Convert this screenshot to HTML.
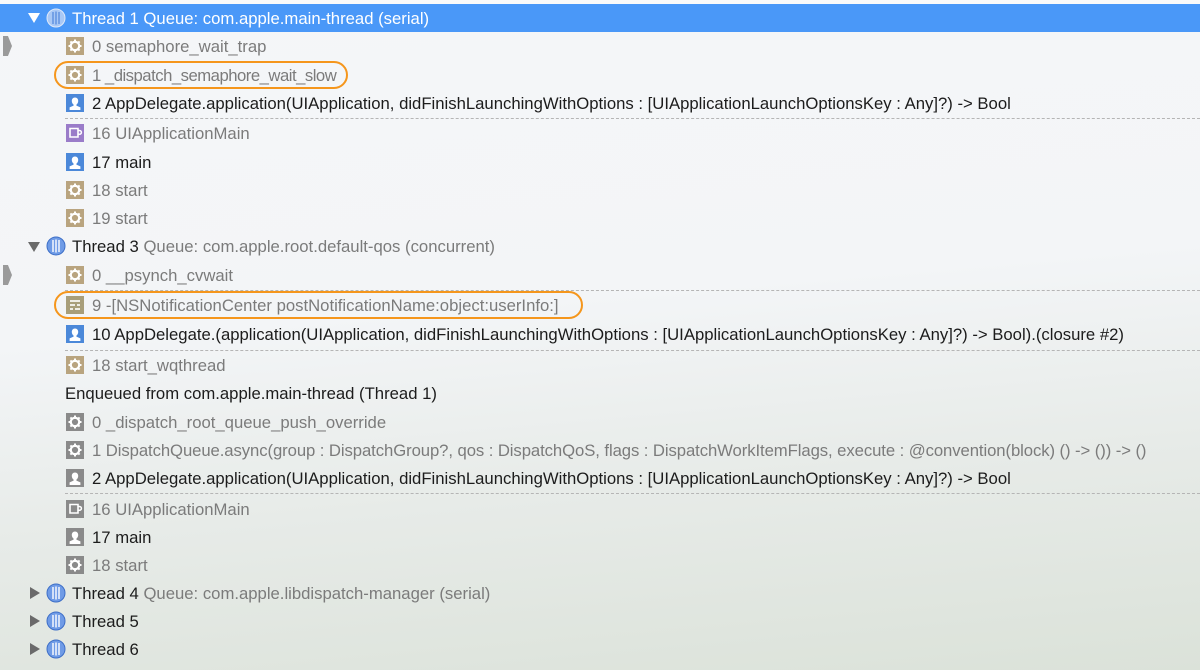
<!DOCTYPE html>
<html><head><meta charset="utf-8"><style>
html,body{margin:0;padding:0}
body{width:1200px;height:670px;overflow:hidden;position:relative;font-family:"Liberation Sans",Helvetica,Arial,sans-serif;font-size:16.7px;background:linear-gradient(175deg,#f5f6f8 0%,#f3f5f7 45%,#e7ebe8 70%,#dbe2d9 100%);}
.r{position:absolute;height:24px;line-height:26px;white-space:nowrap;color:#1c1c1c}
.g{color:#7b7b7b}
.ic{position:absolute;width:18px;height:18px;box-sizing:border-box}
.dash{position:absolute;left:65px;right:0;border-top:1px dashed #b5b5b5;height:0}
.tri{position:absolute;width:0;height:0}
.sel{position:absolute;left:0;top:4px;width:1200px;height:28px;background:#4a98f8}
.oval{position:absolute;border:2.5px solid #f5961c;border-radius:14px;box-sizing:border-box}
.tab{position:absolute;left:3px;width:9px;height:20px;background:#9a9a9a;clip-path:polygon(0 0,55% 0,100% 50%,55% 100%,0 100%)}
</style></head><body>
<div style="position:absolute;left:0;top:0;width:1200px;height:4px;background:#fafafa;border-bottom:1px solid #ddd"></div>
<div class="sel"></div>
<svg width="0" height="0" style="position:absolute">
<defs>
<symbol id="gear" viewBox="0 0 18 18"><circle cx="9" cy="9" r="4.2" fill="none" stroke="#fff" stroke-width="2.2"/><g stroke="#fff" stroke-width="2"><line x1="9" y1="2.5" x2="9" y2="4.5"/><line x1="9" y1="13.5" x2="9" y2="15.5"/><line x1="2.5" y1="9" x2="4.5" y2="9"/><line x1="13.5" y1="9" x2="15.5" y2="9"/><line x1="4.4" y1="4.4" x2="5.8" y2="5.8"/><line x1="12.2" y1="12.2" x2="13.6" y2="13.6"/><line x1="4.4" y1="13.6" x2="5.8" y2="12.2"/><line x1="12.2" y1="5.8" x2="13.6" y2="4.4"/></g></symbol>
<symbol id="person" viewBox="0 0 18 18"><path d="M9 3.5c-2 0-3.2 1.5-3.2 3.5 0 1.6.8 3 1.8 3.6v1l-4 1.8V16h10.8v-2.6l-4-1.8v-1c1-.6 1.8-2 1.8-3.6 0-2-1.2-3.5-3.2-3.5z" fill="#fff"/></symbol>
<symbol id="cup" viewBox="0 0 18 18"><path d="M4 4.5h8v8.5H4z" fill="none" stroke="#fff" stroke-width="1.6"/><path d="M12 6.5h1.5a1.8 1.8 0 0 1 0 3.8H12" fill="none" stroke="#fff" stroke-width="1.5"/></symbol>
<symbol id="lines" viewBox="0 0 18 18"><g stroke="#fff" stroke-width="1.6"><line x1="4" y1="5" x2="14" y2="5"/><line x1="4" y1="9" x2="9" y2="9"/><line x1="11" y1="9" x2="14" y2="9"/><line x1="4" y1="13" x2="7" y2="13"/><line x1="9" y1="13" x2="14" y2="13"/></g></symbol>
<symbol id="thread" viewBox="0 0 20 20"><circle cx="10" cy="10" r="9" fill="#6f9be6" stroke="#3e6fc7" stroke-width="1"/><g stroke="#fff" stroke-width="1.4"><line x1="7" y1="4" x2="7" y2="16"/><line x1="10" y1="3.5" x2="10" y2="16.5"/><line x1="13" y1="4" x2="13" y2="16"/></g></symbol>
<symbol id="threadsel" viewBox="0 0 20 20"><circle cx="10" cy="10" r="9" fill="#a9c8f5" stroke="#dfe9f9" stroke-width="1"/><g stroke="#5c8fe0" stroke-width="1.4"><line x1="7" y1="4" x2="7" y2="16"/><line x1="10" y1="3.5" x2="10" y2="16.5"/><line x1="13" y1="4" x2="13" y2="16"/></g></symbol>
</defs></svg>

<div class="tri" style="left:28px;top:13px;border-left:6px solid transparent;border-right:6px solid transparent;border-top:10px solid #fff"></div>
<svg style="position:absolute;left:46px;top:8px" width="20" height="20"><use href="#threadsel"/></svg>
<div class="r" style="left:72px;top:6px;color:#fff">Thread 1 Queue: com.apple.main-thread (serial)</div>

<div class="tab" style="top:36px"></div>
<svg class="ic" style="left:66px;top:37px;background:#b9a47f" width="18" height="18"><use href="#gear"/></svg>
<div class="r g" style="left:92px;top:34px">0 semaphore_wait_trap</div>
<svg class="ic" style="left:66px;top:66px;background:#b9a47f" width="18" height="18"><use href="#gear"/></svg>
<div class="r g" style="left:92px;top:63px;letter-spacing:-0.5px">1 _dispatch_semaphore_wait_slow</div>
<div class="oval" style="left:54px;top:61px;width:294px;height:28px"></div>
<svg class="ic" style="left:66px;top:94px;background:#4b88d9" width="18" height="18"><use href="#person"/></svg>
<div class="r" style="left:92px;top:91px">2 AppDelegate.application(UIApplication, didFinishLaunchingWithOptions : [UIApplicationLaunchOptionsKey : Any]?) -&gt; Bool</div>
<div class="dash" style="top:118px"></div>
<svg class="ic" style="left:66px;top:124px;background:#9a7cc9" width="18" height="18"><use href="#cup"/></svg>
<div class="r g" style="left:92px;top:121px">16 UIApplicationMain</div>
<svg class="ic" style="left:66px;top:153px;background:#4b88d9" width="18" height="18"><use href="#person"/></svg>
<div class="r" style="left:92px;top:150px">17 main</div>
<svg class="ic" style="left:66px;top:181px;background:#b9a47f" width="18" height="18"><use href="#gear"/></svg>
<div class="r g" style="left:92px;top:178px">18 start</div>
<svg class="ic" style="left:66px;top:209px;background:#b9a47f" width="18" height="18"><use href="#gear"/></svg>
<div class="r g" style="left:92px;top:206px">19 start</div>

<div class="tri" style="left:28px;top:242px;border-left:6px solid transparent;border-right:6px solid transparent;border-top:10px solid #6a6a6a"></div>
<svg style="position:absolute;left:46px;top:236px" width="20" height="20"><use href="#thread"/></svg>
<div class="r" style="left:72px;top:234px">Thread 3 <span class="g">Queue: com.apple.root.default-qos (concurrent)</span></div>
<div class="tab" style="top:265px"></div>
<svg class="ic" style="left:66px;top:266px;background:#b9a47f" width="18" height="18"><use href="#gear"/></svg>
<div class="r g" style="left:92px;top:263px">0 __psynch_cvwait</div>
<div class="dash" style="top:290px"></div>
<svg class="ic" style="left:66px;top:296px;background:#a89e7a" width="18" height="18"><use href="#lines"/></svg>
<div class="r g" style="left:92px;top:293px">9 -[NSNotificationCenter postNotificationName:object:userInfo:]</div>
<div class="oval" style="left:54px;top:291px;width:529px;height:28px"></div>
<svg class="ic" style="left:66px;top:325px;background:#4b88d9" width="18" height="18"><use href="#person"/></svg>
<div class="r" style="left:92px;top:322px">10 AppDelegate.(application(UIApplication, didFinishLaunchingWithOptions : [UIApplicationLaunchOptionsKey : Any]?) -&gt; Bool).(closure #2)</div>
<div class="dash" style="top:350px"></div>
<svg class="ic" style="left:66px;top:356px;background:#b9a47f" width="18" height="18"><use href="#gear"/></svg>
<div class="r g" style="left:92px;top:353px">18 start_wqthread</div>
<div class="r" style="left:65px;top:381px">Enqueued from com.apple.main-thread (Thread 1)</div>
<svg class="ic" style="left:66px;top:413px;background:#8a8a8a" width="18" height="18"><use href="#gear"/></svg>
<div class="r g" style="left:92px;top:410px">0 _dispatch_root_queue_push_override</div>
<svg class="ic" style="left:66px;top:441px;background:#8a8a8a" width="18" height="18"><use href="#gear"/></svg>
<div class="r g" style="left:92px;top:438px;letter-spacing:-0.08px">1 DispatchQueue.async(group : DispatchGroup?, qos : DispatchQoS, flags : DispatchWorkItemFlags, execute : @convention(block) () -&gt; ()) -&gt; ()</div>
<svg class="ic" style="left:66px;top:469px;background:#8a8a8a" width="18" height="18"><use href="#person"/></svg>
<div class="r" style="left:92px;top:466px">2 AppDelegate.application(UIApplication, didFinishLaunchingWithOptions : [UIApplicationLaunchOptionsKey : Any]?) -&gt; Bool</div>
<div class="dash" style="top:493px"></div>
<svg class="ic" style="left:66px;top:500px;background:#8a8a8a" width="18" height="18"><use href="#cup"/></svg>
<div class="r g" style="left:92px;top:497px">16 UIApplicationMain</div>
<svg class="ic" style="left:66px;top:528px;background:#8a8a8a" width="18" height="18"><use href="#person"/></svg>
<div class="r" style="left:92px;top:525px">17 main</div>
<svg class="ic" style="left:66px;top:556px;background:#8a8a8a" width="18" height="18"><use href="#gear"/></svg>
<div class="r g" style="left:92px;top:553px">18 start</div>

<div class="tri" style="left:30px;top:587px;border-top:6px solid transparent;border-bottom:6px solid transparent;border-left:10px solid #6a6a6a"></div>
<svg style="position:absolute;left:46px;top:583px" width="20" height="20"><use href="#thread"/></svg>
<div class="r" style="left:72px;top:581px">Thread 4 <span class="g">Queue: com.apple.libdispatch-manager (serial)</span></div>
<div class="tri" style="left:30px;top:615px;border-top:6px solid transparent;border-bottom:6px solid transparent;border-left:10px solid #6a6a6a"></div>
<svg style="position:absolute;left:46px;top:611px" width="20" height="20"><use href="#thread"/></svg>
<div class="r" style="left:72px;top:609px">Thread 5</div>
<div class="tri" style="left:30px;top:643px;border-top:6px solid transparent;border-bottom:6px solid transparent;border-left:10px solid #6a6a6a"></div>
<svg style="position:absolute;left:46px;top:639px" width="20" height="20"><use href="#thread"/></svg>
<div class="r" style="left:72px;top:637px">Thread 6</div>
</body></html>
